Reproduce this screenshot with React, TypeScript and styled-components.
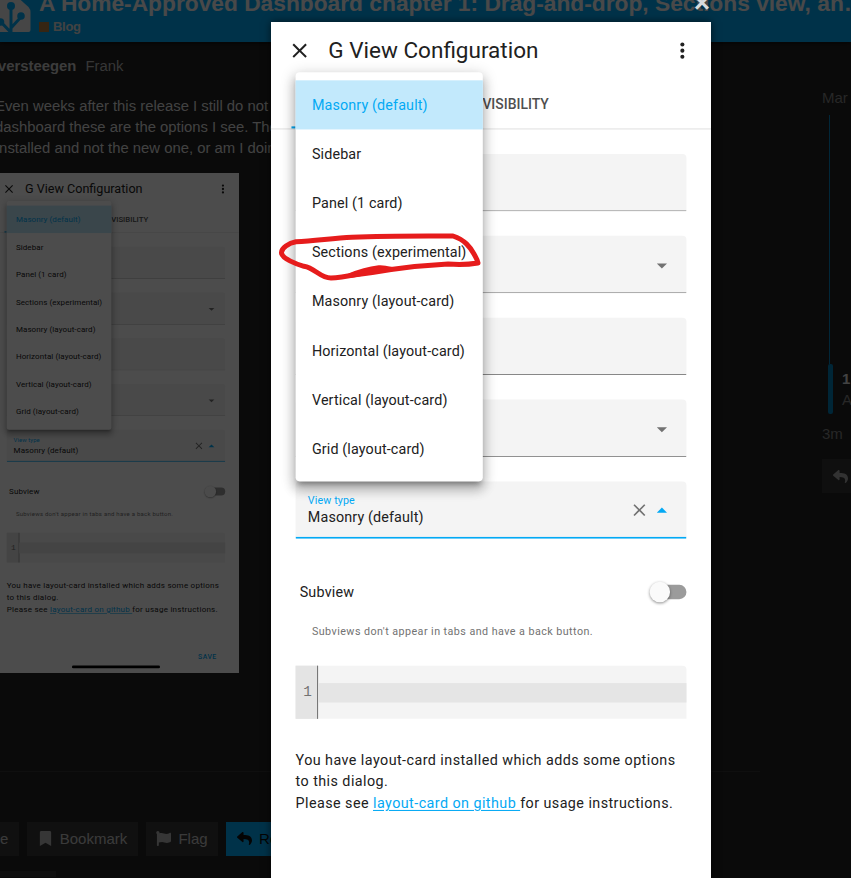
import React from "react";
import styled, { createGlobalStyle, css } from "styled-components";
import { FaBookmark, FaFlag, FaReply } from "react-icons/fa";

const GlobalStyle = createGlobalStyle`
  * { box-sizing: border-box; }
  body { margin: 0; background: #222; overflow: hidden; }
  a { color: inherit; }
`;

const arial = `"Liberation Sans", Arial, sans-serif`;
const roboto = `Roboto, "Liberation Sans", sans-serif`;

/* ---------- Forum page ---------- */

const Page = styled.div`
  position: relative;
  display: flex;
  flex-direction: column;
  width: 851px;
  height: 878px;
  overflow: hidden;
  background: #222;
  color: #ddd;
  font-family: ${arial};
  font-size: 15px;
`;

const SiteHeader = styled.header`
  display: flex;
  flex: none;
  gap: 8px;
  height: 42px;
  background: #03a9f4;
  box-shadow: 0 2px 4px rgba(0, 0, 0, 0.5);
`;

const Logo = styled.svg`
  flex: none;
  width: 43px;
  height: 43px;
  margin: -11px 0 0 -12px;
`;

const TopicInfo = styled.div`
  display: flex;
  flex-direction: column;
  margin-top: -12px;
`;

const TopicTitle = styled.h1`
  margin: 0;
  height: 30px;
  line-height: 30px;
  font-size: 22.75px;
  font-weight: 700;
  white-space: nowrap;
  color: #f3f3f3;
`;

const Category = styled.div`
  display: flex;
  align-items: center;
  gap: 4px;
  height: 17px;
  font-size: 13px;
  letter-spacing: -0.3px;
  font-weight: 700;
  color: #dedede;

  &::before {
    content: "";
    width: 10px;
    height: 10px;
    background: #b17e42;
  }
`;

const Body = styled.div`
  display: flex;
  flex: 1;
  justify-content: space-between;
`;

const Post = styled.article`
  display: flex;
  flex-direction: column;
  width: 760px;
`;

const Author = styled.div`
  display: flex;
  gap: 9px;
  margin: 15px 0 0 -2px;
  line-height: 18px;
  font-size: 14.85px;
  color: #b5b5b5;
  b { color: #c8c8c8; }
`;

const PostText = styled.div`
  margin: 21px 0 0 -5px;
  line-height: 21px;
  font-size: 14.85px;
  white-space: nowrap;
  color: #ddd;
`;

const Thumbnail = styled.div`
  width: 239px;
  height: 500px;
  margin-top: 14px;
  overflow: hidden;
  background: #fff;
`;

const PostActions = styled.div`
  display: flex;
  gap: 8px;
  margin-top: 98px;
  padding-top: 50px;
  border-top: 1px solid #333;
`;

const ActionButton = styled.div<{ $width: number; $primary?: boolean }>`
  display: flex;
  flex: none;
  align-items: center;
  justify-content: ${(p) => (p.$primary ? "flex-start" : "center")};
  gap: 7px;
  width: ${(p) => p.$width}px;
  height: 34px;
  padding-bottom: 1px;
  padding-left: ${(p) => (p.$primary ? 11 : 0)}px;
  font-size: 15px;
  color: ${(p) => (p.$primary ? "#101010" : "#c4c4c4")};
  background: ${(p) => (p.$primary ? "#03a9f4" : "#383838")};
  svg { color: ${(p) => (p.$primary ? "#101010" : "#b5b5b5")}; }
`;

const ClippedButton = styled(ActionButton)`
  justify-content: flex-start;
`;

const PostFooter = styled.div`
  width: 56px;
  height: 6px;
  margin-top: 15px;
  background: #333;
`;

const Timeline = styled.aside`
  display: flex;
  flex-direction: column;
  width: 29px;
  padding-top: 47px;
  color: #838383;
  white-space: nowrap;
`;

const TimelineDate = styled.div`
  line-height: 18px;
`;

const Track = styled.div`
  display: flex;
  align-items: flex-end;
  height: 299px;
  margin: 8px 0 11px 6px;
`;

const Line = styled.div`
  flex: none;
  align-self: flex-start;
  width: 1px;
  height: 249px;
  margin-left: 1px;
  background: #0584c0;
`;

const Handle = styled.div`
  flex: none;
  width: 5px;
  height: 50px;
  margin-left: -2px;
  border-radius: 2px;
  background: #0280ba;
`;

const Position = styled.div`
  height: 50px;
  padding: 4px 0 0 9px;
  line-height: 21px;
  b { color: #ddd; }
`;

const ReplyBox = styled.div`
  display: flex;
  align-items: center;
  height: 34px;
  margin-top: 16px;
  padding-left: 11px;
  background: #333;
  color: #a8a8a8;
`;

const Overlay = styled.div`
  position: absolute;
  inset: 0;
  background: rgba(0, 0, 0, 0.7);
`;

const LightboxFigure = styled.div`
  position: absolute;
  left: 271px;
  top: 22px;
  width: 440px;
  height: 856px;
  overflow: hidden;
`;

const FigureShadow = styled.div`
  position: absolute;
  left: 271px;
  top: 22px;
  width: 440px;
  height: 894px;
  box-shadow: 0 0 8px rgba(0, 0, 0, 0.6);
`;

const CloseLightbox = styled.div`
  position: absolute;
  left: 693px;
  top: -11px;
  width: 18px;
  line-height: 28px;
  text-align: center;
  font-size: 28px;
  font-weight: 700;
  color: #d6dade;
`;

const Scribble = styled.svg`
  position: absolute;
  left: 271px;
  top: 222px;
`;

/* ---------- Phone screen with the view dialog ---------- */

const Screen = styled.div<{ $scale: number; $shift?: number }>`
  position: relative;
  width: 430px;
  height: 874px;
  margin-left: ${(p) => p.$shift ?? 0}px;
  transform: scale(${(p) => p.$scale});
  transform-origin: 0 0;
  display: flex;
  flex-direction: column;
  background: #fff;
  color: #212121;
  font-family: ${roboto};
  font-size: 14px;
`;

const DialogHeader = styled.div`
  display: flex;
  align-items: center;
  height: 56px;
  padding: 0 16px;
  svg { flex: none; }
`;

const DialogTitle = styled.div`
  flex: 1;
  margin-left: 16px;
  font-size: 22px;
  line-height: 28px;
`;

const TabBar = styled.div`
  display: flex;
  height: 49px;
  border-bottom: 1px solid #e0e0e0;
`;

const Tab = styled.div<{ $active?: boolean; $width: number }>`
  display: flex;
  align-items: center;
  justify-content: center;
  width: ${(p) => p.$width}px;
  font-size: 13.6px;
  font-weight: 500;
  color: #4f4f4f;
  ${(p) =>
    p.$active &&
    css`
      margin-left: 20px;
      border-bottom: 2px solid #03a9f4;
    `}
`;

const Form = styled.div`
  display: flex;
  flex-direction: column;
  gap: 24px;
  padding: 24px 24px 0;
`;

const Field = styled.div<{ $focused?: boolean }>`
  display: flex;
  align-items: center;
  justify-content: flex-end;
  height: 56px;
  padding: 2px 12px 0;
  border-radius: 4px 4px 0 0;
  border-bottom: ${(p) => (p.$focused ? "2px solid #03a9f4" : "1px solid #868686")};
  background: #f4f4f4;
`;

const FieldText = styled.div`
  display: flex;
  flex: 1;
  flex-direction: column;
  margin-top: -1px;
  font-size: 14px;
  line-height: 17px;
  letter-spacing: 0.13px;
`;

const FieldLabel = styled.span`
  font-size: 10.4px;
  line-height: 16px;
  color: #03a9f4;
`;

const SwitchRow = styled.div`
  display: flex;
  align-items: center;
  justify-content: space-between;
  height: 40px;
  margin: 32px 24px 0 28px;
  letter-spacing: 0.2px;
`;

const SwitchTrack = styled.div`
  display: flex;
  align-items: center;
  width: 32px;
  height: 14px;
  margin-left: auto;
  border-radius: 7px;
  background: #9b9b9b;
`;

const SwitchThumb = styled.div`
  width: 20px;
  height: 20px;
  flex: none;
  margin-left: -4px;
  border-radius: 50%;
  background: #fafafa;
  box-shadow: 0 1px 3px rgba(0, 0, 0, 0.45);
`;

const Helper = styled.div`
  height: 16px;
  margin: 11px 0 0 40px;
  font-size: 10.5px;
  line-height: 16px;
  letter-spacing: 0.43px;
  color: #727272;
`;

const Editor = styled.div`
  display: flex;
  align-items: center;
  flex: none;
  height: 52px;
  margin: 25px 24px 0;
  border-radius: 0 4px 0 0;
  background: #f4f4f4;
`;

const Gutter = styled.div`
  display: flex;
  align-items: center;
  justify-content: flex-end;
  width: 22px;
  height: 52px;
  padding-right: 5px;
  border-right: 1px solid #727272;
  background: #e4e4e4;
  font-family: "Liberation Mono", monospace;
  font-size: 14px;
  color: #727272;
`;

const ActiveLine = styled.div`
  flex: 1;
  height: 19px;
  background: #e5e5e5;
`;

const Note = styled.p`
  margin: 30px 24px 0;
  line-height: 21px;
  letter-spacing: 0.43px;
  white-space: nowrap;
  a { color: #03a9f4; text-underline-offset: 1.5px; }
`;

const Save = styled.div`
  margin: 63px 39px 0 auto;
  line-height: 18px;
  font-size: 12px;
  font-weight: 500;
  letter-spacing: 0.8px;
  color: #03a9f4;
`;

const HomeIndicator = styled.div`
  width: 154px;
  height: 5px;
  margin: 6px auto 0;
  border-radius: 3px;
  background: #000;
`;

const Menu = styled.ul`
  position: absolute;
  left: 24px;
  top: 49px;
  width: 183px;
  margin: 0;
  padding: 8px 0;
  list-style: none;
  border-radius: 4px;
  background: #fff;
  box-shadow: 0 5px 5px -3px rgba(0, 0, 0, 0.3), 0 8px 10px 1px rgba(0, 0, 0, 0.18),
    0 3px 14px 2px rgba(0, 0, 0, 0.16);
`;

const MenuItem = styled.li<{ $selected: boolean }>`
  height: 48px;
  padding-left: 16px;
  line-height: 48px;
  letter-spacing: 0.13px;
  white-space: nowrap;
  color: ${(p) => (p.$selected ? "#03a9f4" : "#212121")};
  background: ${(p) => (p.$selected ? "#c2e9fc" : "transparent")};
`;

const viewTypes = [
  "Masonry (default)",
  "Sidebar",
  "Panel (1 card)",
  "Sections (experimental)",
  "Masonry (layout-card)",
  "Horizontal (layout-card)",
  "Vertical (layout-card)",
  "Grid (layout-card)",
];

const CrossIcon = ({ size, color }: { size: number; color: string }) => (
  <svg width={size} height={size} viewBox="0 0 24 24" fill={color}>
    <path d="M19 6.41 17.59 5 12 10.59 6.41 5 5 6.41 10.59 12 5 17.59 6.41 19 12 13.41 17.59 19 19 17.59 13.41 12z" />
  </svg>
);

const Caret = ({ up }: { up?: boolean }) => (
  <svg width="24" height="24" viewBox="0 0 24 24" fill={up ? "#03a9f4" : "#727272"}>
    <path d={up ? "M7 14.5l5-5 5 5z" : "M7 10l5 5 5-5z"} />
  </svg>
);

function ViewDialog({ scale, shift }: { scale: number; shift?: number }) {
  return (
    <Screen $scale={scale} $shift={shift}>
      <DialogHeader>
        <CrossIcon size={24} color="#212121" />
        <DialogTitle>G View Configuration</DialogTitle>
        <svg width="24" height="24" viewBox="0 0 24 24" fill="#212121">
          <circle cx="12" cy="6" r="2" />
          <circle cx="12" cy="12" r="2" />
          <circle cx="12" cy="18" r="2" />
        </svg>
      </DialogHeader>
      <TabBar>
        <Tab $active $width={170} />
        <Tab $width={98}>VISIBILITY</Tab>
      </TabBar>
      <Form>
        <Field />
        <Field>
          <Caret />
        </Field>
        <Field />
        <Field>
          <Caret />
        </Field>
        <Field $focused>
          <FieldText>
            <FieldLabel>View type</FieldLabel>
            Masonry (default)
          </FieldText>
          <CrossIcon size={20} color="#727272" />
          <Caret up />
        </Field>
      </Form>
      <SwitchRow>
        Subview
        <SwitchTrack>
          <SwitchThumb />
        </SwitchTrack>
      </SwitchRow>
      <Helper>Subviews don't appear in tabs and have a back button.</Helper>
      <Editor>
        <Gutter>1</Gutter>
        <ActiveLine />
      </Editor>
      <Note>
        You have layout-card installed which adds some options
        <br />
        to this dialog.
        <br />
        Please see <a href="#github">layout-card on github </a>for usage instructions.
      </Note>
      <Save>SAVE</Save>
      <HomeIndicator />
      <Menu>
        {viewTypes.map((name, i) => (
          <MenuItem key={name} $selected={i === 0}>
            {name}
          </MenuItem>
        ))}
      </Menu>
    </Screen>
  );
}

export default function App() {
  return (
    <>
      <GlobalStyle />
      <Page>
        <SiteHeader>
          <Logo viewBox="0 0 43 43">
            <path
              d="M21.5 1 L40.5 18 Q42.5 20.5 42.5 23 V41 Q42.5 43 40.5 43 H3 Q.5 43 .5 40 V23 Q.5 20.5 2.5 18 Z"
              fill="#ececec"
            />
            <g stroke="#03a9f4" strokeWidth="3" fill="none">
              <path d="M23 43 V17 M23 39 L33 28 M22.500 43 L13 33" />
            </g>
            <g fill="#03a9f4">
              <circle cx="23" cy="17" r="4" />
              <circle cx="33" cy="27" r="3.8" />
              <circle cx="12.5" cy="33" r="3.8" />
            </g>
          </Logo>
          <TopicInfo>
            <TopicTitle>
              A Home-Approved Dashboard chapter 1: Drag-and-drop, Sections view, an…
            </TopicTitle>
            <Category>Blog</Category>
          </TopicInfo>
        </SiteHeader>
        <Body>
          <Post>
            <Author>
              <b>versteegen</b>
              <span>Frank</span>
            </Author>
            <PostText>
              Even weeks after this release I still do not
              <br />
              dashboard these are the options I see. The
              <br />
              Installed and not the new one, or am I doing
            </PostText>
            <Thumbnail>
              <ViewDialog scale={0.572} shift={-7} />
            </Thumbnail>
            <PostActions>
              <ClippedButton $width={19}>e</ClippedButton>
              <ActionButton $width={111}>
                <FaBookmark size={15} />
                Bookmark
              </ActionButton>
              <ActionButton $width={72}>
                <FaFlag size={15} />
                Flag
              </ActionButton>
              <ActionButton $width={85} $primary>
                <FaReply size={15} />
                Reply
              </ActionButton>
            </PostActions>
            <PostFooter />
          </Post>
          <Timeline>
            <TimelineDate>Mar</TimelineDate>
            <Track>
              <Line />
              <Handle />
              <Position>
                <b>1</b>
                <br />A
              </Position>
            </Track>
            <TimelineDate>3m</TimelineDate>
            <ReplyBox>
              <FaReply size={15} />
            </ReplyBox>
          </Timeline>
        </Body>
        <Overlay />
        <FigureShadow />
        <LightboxFigure>
          <ViewDialog scale={1.0233} />
        </LightboxFigure>
        <Scribble width="220" height="64" viewBox="271 222 220 64">
          <g fill="none" stroke="#e61c1c" strokeWidth="5" strokeLinecap="round" strokeLinejoin="round">
            <path d="M296 241.8 C316 240.5 333 238.5 352 237.3 C388 235.6 424 235.8 453 236 C465 240 470 247 474 254 Q477.500 260 478 263 Q464 265.300 448 264 Q420 265.500 393 269.300 C372 269 348 278 331 278 C320 278 315 268 304 266.300 C296 264 282 258.500 281.500 253 C281 248 289 243 296 241.800" />
            <path d="M350 275.500 Q364 270 379 267.800 Q384 267.500 391 269.500 Q371 273 350 275.500Z" fill="#e61c1c" />
          </g>
        </Scribble>
        <CloseLightbox>×</CloseLightbox>
      </Page>
    </>
  );
}
